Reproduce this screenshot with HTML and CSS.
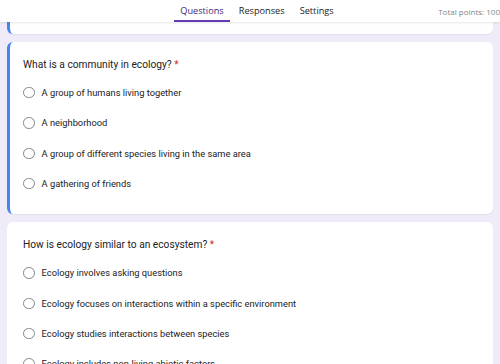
FILE: index.html
```html
<!DOCTYPE html>
<html>
<head>
<meta charset="utf-8">
<link rel="stylesheet" href="styles.css">
</head>
<body>
<header class="topbar">
  <div class="spacer"></div>
  <nav class="tabs">
    <span class="tab active">Questions</span>
    <span class="tab">Responses</span>
    <span class="tab">Settings</span>
  </nav>
  <div class="total">Total points: 100</div>
</header>
<main class="main">
  <section class="card card-stub selected"></section>
  <section class="card selected">
    <div class="question">What is a community in ecology? <span class="req">*</span></div>
    <div class="options">
      <label class="option"><span class="radio"></span><span>A group of humans living together</span></label>
      <label class="option"><span class="radio"></span><span>A neighborhood</span></label>
      <label class="option"><span class="radio"></span><span>A group of different species living in the same area</span></label>
      <label class="option"><span class="radio"></span><span>A gathering of friends</span></label>
    </div>
  </section>
  <section class="card">
    <div class="question">How is ecology similar to an ecosystem? <span class="req">*</span></div>
    <div class="options">
      <label class="option"><span class="radio"></span><span>Ecology involves asking questions</span></label>
      <label class="option"><span class="radio"></span><span>Ecology focuses on interactions within a specific environment</span></label>
      <label class="option"><span class="radio"></span><span>Ecology studies interactions between species</span></label>
      <label class="option"><span class="radio"></span><span>Ecology includes non-living abiotic factors</span></label>
    </div>
  </section>
</main>
</body>
</html>
```
FILE: styles.css
```css
html, body {
  margin: 0;
  padding: 0;
  background: #f0ebf8;
  height: 364px;
  overflow: hidden;
}
body {
  font-family: Roboto, "Liberation Sans", Arial, sans-serif;
  color: #202124;
}
.topbar {
  background: #fff;
  height: 22px;
  display: grid;
  grid-template-columns: 1fr auto 1fr;
  align-items: stretch;
  box-shadow: 0 1px 2px rgba(60, 64, 67, 0.12);
  position: relative;
  z-index: 1;
}
.tabs {
  display: flex;
  gap: 2px;
  margin-left: 14px;
}
.tab {
  font-family: "Open Sans", Inter, sans-serif;
  font-size: 9.2px;
  color: #202124;
  padding: 0 6.5px;
  display: flex;
  align-items: center;
  border-bottom: 2px solid transparent;
  padding-top: 1px;
}
.tab.active {
  color: #3c1f7a;
  border-bottom-color: #673ab7;
}
.total {
  justify-self: end;
  align-self: center;
  font-family: "Open Sans", sans-serif;
  font-size: 8px;
  color: #80868b;
  margin-right: 0;
  white-space: nowrap;
}
.main {
  padding: 0 7px;
  display: flex;
  flex-direction: column;
  gap: 8.5px;
}
.card {
  background: #fff;
  border-radius: 6px;
  padding: 15px 16px 15px 16px;
  box-shadow: 0 1px 1px rgba(60, 64, 67, 0.08);
}
.card.selected {
  border-left: 3px solid #4285f4;
  padding-left: 13px;
}
.card-stub {
  height: 11.5px;
  padding: 0;
  border-radius: 0 0 6px 6px;
}
.question {
  font-size: 10.2px;
  line-height: 16px;
  color: #202124;
}
.req {
  color: #d93025;
}
.options {
  margin-top: 4.5px;
  display: flex;
  flex-direction: column;
}
.option {
  height: 30.33px;
  display: flex;
  align-items: center;
  gap: 7px;
  font-size: 9.3px;
  color: #202124;
}
.radio {
  width: 9.6px;
  height: 9.6px;
  border: 1.2px solid #80868b;
  border-radius: 50%;
  flex: none;
}
```
